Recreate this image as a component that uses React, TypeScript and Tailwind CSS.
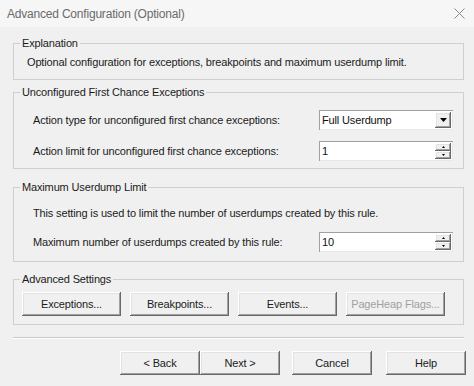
import React from "react";

const btnShadow =
  "shadow-[inset_-1px_-1px_0_#696969,inset_1px_1px_0_#ffffff,inset_-2px_-2px_0_#a0a0a0,inset_2px_2px_0_#e3e3e3]";

function Btn({ label, disabled, w = "w-[99px]" }: { label: string; disabled?: boolean; w?: string }) {
  return (
    <div
      className={`${w} h-[24px] flex items-center justify-center bg-[#f0f0f0] ${btnShadow} ${
        disabled ? "text-[#a0a0a0]" : "text-[#1b1b1b]"
      }`}
    >
      {label}
    </div>
  );
}

function Group({ title, children, className = "" }: { title: string; children: React.ReactNode; className?: string }) {
  return (
    <fieldset className={`border border-[#cfcfcf] ${className}`}>
      <legend className="ml-[6px] px-[2px] leading-[14px]">{title}</legend>
      {children}
    </fieldset>
  );
}

function Field({ value, kind }: { value: string; kind: "combo" | "spin" }) {
  return (
    <div className="w-[134px] h-[20px] flex bg-white shadow-[inset_1px_1px_0_#a0a0a0,inset_-1px_-1px_0_#e8e8e8] p-[2px]">
      <div className="flex-1 flex items-center pl-[1px] text-[#111]">{value}</div>
      {kind === "combo" ? (
        <div className={`w-[16px] h-full flex items-center justify-center bg-[#f0f0f0] ${btnShadow}`}>
          <svg width="7" height="4" viewBox="0 0 7 4">
            <path d="M0 0H7L3.5 4Z" fill="#000" />
          </svg>
        </div>
      ) : (
        <div className="w-[16px] h-full flex flex-col">
          <div className={`flex-1 flex items-center justify-center bg-[#f0f0f0] ${btnShadow}`}>
            <svg width="3" height="2" viewBox="0 0 3 2">
              <path d="M0 2H3L1.5 0Z" fill="#000" />
            </svg>
          </div>
          <div className={`flex-1 flex items-center justify-center bg-[#f0f0f0] ${btnShadow}`}>
            <svg width="3" height="2" viewBox="0 0 3 2">
              <path d="M0 0H3L1.5 2Z" fill="#000" />
            </svg>
          </div>
        </div>
      )}
    </div>
  );
}

export default function App() {
  return (
    <div className="w-[474px] h-[386px] bg-[#f0f0f0] font-['Liberation_Sans',Arial,sans-serif] text-[11px] tracking-[-0.15px] text-[#1b1b1b] overflow-hidden flex flex-col">
      <div className="h-[27px] shrink-0 flex items-center justify-between pl-[7px] pr-[9px] bg-[#f6f6f6]">
        <span className="text-[12px] tracking-[-0.2px] text-[#6b6b6b]">Advanced Configuration (Optional)</span>
        <svg width="11" height="11" viewBox="0 0 11 11">
          <path d="M0.5 0.5L10.5 10.5M10.5 0.5L0.5 10.5" stroke="#8a8a8a" strokeWidth="1" />
        </svg>
      </div>
      <div className="flex flex-col pl-[13px] pr-[10px] pt-[9px]">
        <Group title="Explanation">
          <div className="pl-[13px] pt-[5px] pb-[10px] leading-[14px]">
            Optional configuration for exceptions, breakpoints and maximum userdump limit.
          </div>
        </Group>

        <Group title="Unconfigured First Chance Exceptions" className="mt-[5px]">
          <div className="flex flex-col gap-[11px] pl-[19px] pr-[10px] pt-[11px] pb-[7px]">
            <div className="flex items-center justify-between">
              <span>Action type for unconfigured first chance exceptions:</span>
              <Field value="Full Userdump" kind="combo" />
            </div>
            <div className="flex items-center justify-between">
              <span>Action limit for unconfigured first chance exceptions:</span>
              <Field value="1" kind="spin" />
            </div>
          </div>
        </Group>

        <Group title="Maximum Userdump Limit" className="mt-[11px]">
          <div className="pl-[19px] pr-[10px] pt-[12px] pb-[9px]">
            <div className="leading-[14px]">This setting is used to limit the number of userdumps created by this rule.</div>
            <div className="flex items-center justify-between mt-[12px]">
              <span>Maximum number of userdumps created by this rule:</span>
              <Field value="10" kind="spin" />
            </div>
          </div>
        </Group>

        <Group title="Advanced Settings" className="mt-[10px]">
          <div className="flex gap-[9px] pl-[8px] pt-[6px] pb-[8px]">
            <Btn label="Exceptions..." />
            <Btn label="Breakpoints..." />
            <Btn label="Events..." />
            <Btn label="PageHeap Flags..." disabled />
          </div>
        </Group>

        <div className="mt-[12px] h-[2px] border-t border-[#c8c8c8] border-b border-b-white" />

        <div className="mt-[12px] flex justify-end mr-[-2px]">
          <div className="flex">
            <Btn label="< Back" w="w-[80px]" />
            <Btn label="Next >" w="w-[80px]" />
          </div>
          <div className="ml-[12px]">
            <Btn label="Cancel" w="w-[80px]" />
          </div>
          <div className="ml-[14px]">
            <Btn label="Help" w="w-[80px]" />
          </div>
        </div>
      </div>
    </div>
  );
}
